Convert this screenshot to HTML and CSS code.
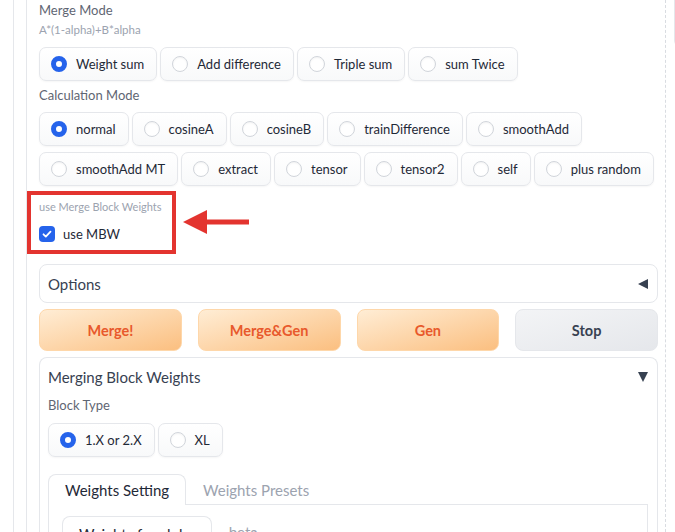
FILE: index.html
```html
<!DOCTYPE html>
<html lang="en">
<head>
  <meta charset="UTF-8">
  <meta name="viewport" content="width=device-width, initial-scale=1.0">
  <title>Merge Block Weights</title>
  <link rel="stylesheet" href="styles.css">
</head>
<body>
  <div class="layout">
    <div class="outer">
      <div class="panel">
        <div class="block-label">Merge Mode</div>
        <div class="block-info">A*(1-alpha)+B*alpha</div>
        <div class="radio-row first">
          <label class="radio"><span class="dot checked"></span>Weight sum</label>
          <label class="radio"><span class="dot"></span>Add difference</label>
          <label class="radio"><span class="dot"></span>Triple sum</label>
          <label class="radio"><span class="dot"></span>sum Twice</label>
        </div>

        <div class="block-label calc">Calculation Mode</div>
        <div class="radio-row second">
          <label class="radio"><span class="dot checked"></span>normal</label>
          <label class="radio"><span class="dot"></span>cosineA</label>
          <label class="radio"><span class="dot"></span>cosineB</label>
          <label class="radio"><span class="dot"></span>trainDifference</label>
          <label class="radio"><span class="dot"></span>smoothAdd</label>
        </div>
        <div class="radio-row third">
          <label class="radio"><span class="dot"></span>smoothAdd MT</label>
          <label class="radio"><span class="dot"></span>extract</label>
          <label class="radio"><span class="dot"></span>tensor</label>
          <label class="radio"><span class="dot"></span>tensor2</label>
          <label class="radio"><span class="dot"></span>self</label>
          <label class="radio"><span class="dot"></span>plus random</label>
        </div>

        <div class="mbw">
          <div class="mbw-label">use Merge Block Weights</div>
          <label class="check-row">
            <span class="check">
              <svg viewBox="0 0 16 16"><path d="M4.5 8.3l2.3 2.3 4.7-5" fill="none" stroke="#fff" stroke-width="1.8" stroke-linecap="round" stroke-linejoin="round"/></svg>
            </span>
            use MBW
          </label>
          <svg class="arrow" viewBox="0 0 66 24">
            <polygon points="0,12 24,0 24,24" fill="#e3342f"/>
            <rect x="23" y="9.5" width="43" height="5" fill="#e3342f"/>
          </svg>
        </div>

        <div class="accordion closed">
          <span class="acc-title">Options</span>
          <svg class="tri" viewBox="0 0 10 10"><polygon points="0,5 10,0 10,10"/></svg>
        </div>

        <div class="actions">
          <button class="btn btn-primary">Merge!</button>
          <button class="btn btn-primary">Merge&amp;Gen</button>
          <button class="btn btn-primary">Gen</button>
          <button class="btn btn-secondary">Stop</button>
        </div>

        <div class="accordion open">
          <div class="acc-head">
            <span class="acc-title">Merging Block Weights</span>
            <svg class="tri" viewBox="0 0 10 10"><polygon points="0,0 10,0 5,10"/></svg>
          </div>
          <div class="block-label sub">Block Type</div>
          <div class="radio-row">
            <label class="radio"><span class="dot checked"></span>1.X or 2.X</label>
            <label class="radio"><span class="dot"></span>XL</label>
          </div>

          <div class="tabs">
            <div class="tab-nav">
              <div class="tab active">Weights Setting</div>
              <div class="tab">Weights Presets</div>
            </div>
            <div class="tab-body">
              <div class="tab-nav">
                <div class="tab active">Weights for alpha</div>
                <div class="tab">beta</div>
              </div>
            </div>
          </div>
        </div>
      </div>
    </div>
    <div class="side">
      <div class="side-box"></div>
    </div>
  </div>
</body>
</html>
```

FILE: styles.css
```css
*,
*::before,
*::after {
  margin: 0;
  padding: 0;
  box-sizing: border-box;
}

body {
  font-family: Lato, 'Open Sans', sans-serif;
  background: #fff;
  color: #1f2937;
  overflow: hidden;
  height: 532px;
}

.layout {
  display: flex;
  margin-left: 13px;
  height: 100%;
}

.outer {
  border-left: 1px solid #e5e7eb;
  padding-left: 12px;
  flex-shrink: 0;
}

.panel {
  width: 640px;
  height: 100%;
  border-left: 1px solid #e5e7eb;
  border-right: 1px dashed #d9dce1;
  padding: 0 7px 0 12px;
}

.side {
  margin-left: 8px;
  flex-shrink: 0;
}

.side-box {
  width: 40px;
  height: 48px;
  border: 1px solid #e5e7eb;
  border-radius: 0 0 0 8px;
  border-top: none;
}

/* labels */
.block-label {
  font-size: 13px;
  line-height: 20px;
  color: #5f6673;
}

.block-label.calc {
  margin-top: 4px;
}

.block-label.sub {
  line-height: 18px;
  margin-top: 9px;
}

.block-info {
  font-size: 11.5px;
  line-height: 14px;
  margin-top: 3px;
  color: #9ca3af;
}

/* radio groups */
.radio-row {
  display: flex;
  gap: 3px;
  margin-top: 9px;
}

.radio-row.first {
  margin-top: 10px;
}

.radio-row.second {
  margin-top: 7px;
}

.radio-row.third {
  margin-top: 6px;
}

.radio {
  display: flex;
  align-items: center;
  gap: 9px;
  height: 34px;
  padding: 0 12px 0 11px;
  border: 1px solid #e5e7eb;
  border-radius: 7px;
  background: linear-gradient(to top, #f8f9fa, #fff);
  box-shadow: 0 1px 2px rgba(0, 0, 0, 0.04);
  font-size: 13px;
  color: #1f2937;
  white-space: nowrap;
  flex-shrink: 0;
}

.dot {
  width: 16px;
  height: 16px;
  border-radius: 50%;
  border: 1px solid #d1d5db;
  background: #fff;
  box-shadow: inset 0 1px 2px rgba(0, 0, 0, 0.05);
}

.dot.checked {
  border: 5px solid #2563eb;
  box-shadow: none;
}

/* use MBW */
.mbw {
  position: relative;
  margin-top: 5px;
  padding: 9px 0;
}

.mbw::after {
  content: '';
  position: absolute;
  left: -12px;
  top: 0;
  width: 149px;
  height: 63px;
  border: 4px solid #e3342f;
}

.mbw-label {
  font-size: 11px;
  line-height: 14px;
  color: #9ca3af;
}

.check-row {
  display: flex;
  align-items: center;
  gap: 8px;
  height: 20px;
  margin-top: 10px;
  font-size: 13px;
  color: #1f2937;
}

.check {
  width: 16px;
  height: 16px;
  border-radius: 4px;
  background: #2563eb;
  display: flex;
}

.check svg {
  width: 16px;
  height: 16px;
}

.arrow {
  position: absolute;
  left: 144px;
  top: 19px;
  width: 66px;
  height: 24px;
}

/* accordions */
.accordion {
  border: 1px solid #e5e7eb;
  border-radius: 8px;
  background: #fff;
}

.accordion.closed {
  margin-top: 11px;
  height: 39px;
  padding: 0 9px 0 8px;
  display: flex;
  align-items: center;
  justify-content: space-between;
}

.accordion.open {
  margin-top: 6px;
  padding: 9px 9px 0 8px;
  height: 200px;
  border-bottom: none;
  border-radius: 8px 8px 0 0;
}

.acc-head {
  display: flex;
  align-items: center;
  justify-content: space-between;
  height: 20px;
}

.acc-title {
  font-size: 15px;
  color: #374151;
}

.tri {
  width: 10px;
  height: 10px;
  fill: #374151;
}

/* buttons */
.actions {
  display: flex;
  gap: 16px;
  margin-top: 6px;
}

.btn {
  flex: 1;
  height: 42px;
  border-radius: 8px;
  font-family: inherit;
  font-size: 14.5px;
  font-weight: 700;
  cursor: pointer;
}

.btn-primary {
  background: linear-gradient(to bottom right, #ffedd5, #fbbf80);
  border: 1px solid #fed7aa;
  color: #e8592c;
}

.btn-secondary {
  background: linear-gradient(to bottom right, #f3f4f6, #e5e7eb);
  border: 1px solid #e5e7eb;
  color: #374151;
}

/* tabs */
.tabs {
  margin-top: 17px;
}

.tab-nav {
  display: flex;
  border-bottom: 1px solid #e5e7eb;
}

.tab {
  height: 30px;
  padding: 0 16px;
  display: flex;
  align-items: center;
  font-size: 15px;
  color: #9ca3af;
  border: 1px solid transparent;
  border-bottom: none;
}

.tab.active {
  color: #1f2937;
  background: #fff;
  border-color: #e5e7eb;
  border-radius: 8px 8px 0 0;
  height: 31px;
  margin-bottom: -1px;
}

.tab-body {
  border: 1px solid #e5e7eb;
  border-top: none;
  padding: 11px 13px;
  height: 80px;
}

.tab-body .tab.active {
  height: 35px;
}
```
